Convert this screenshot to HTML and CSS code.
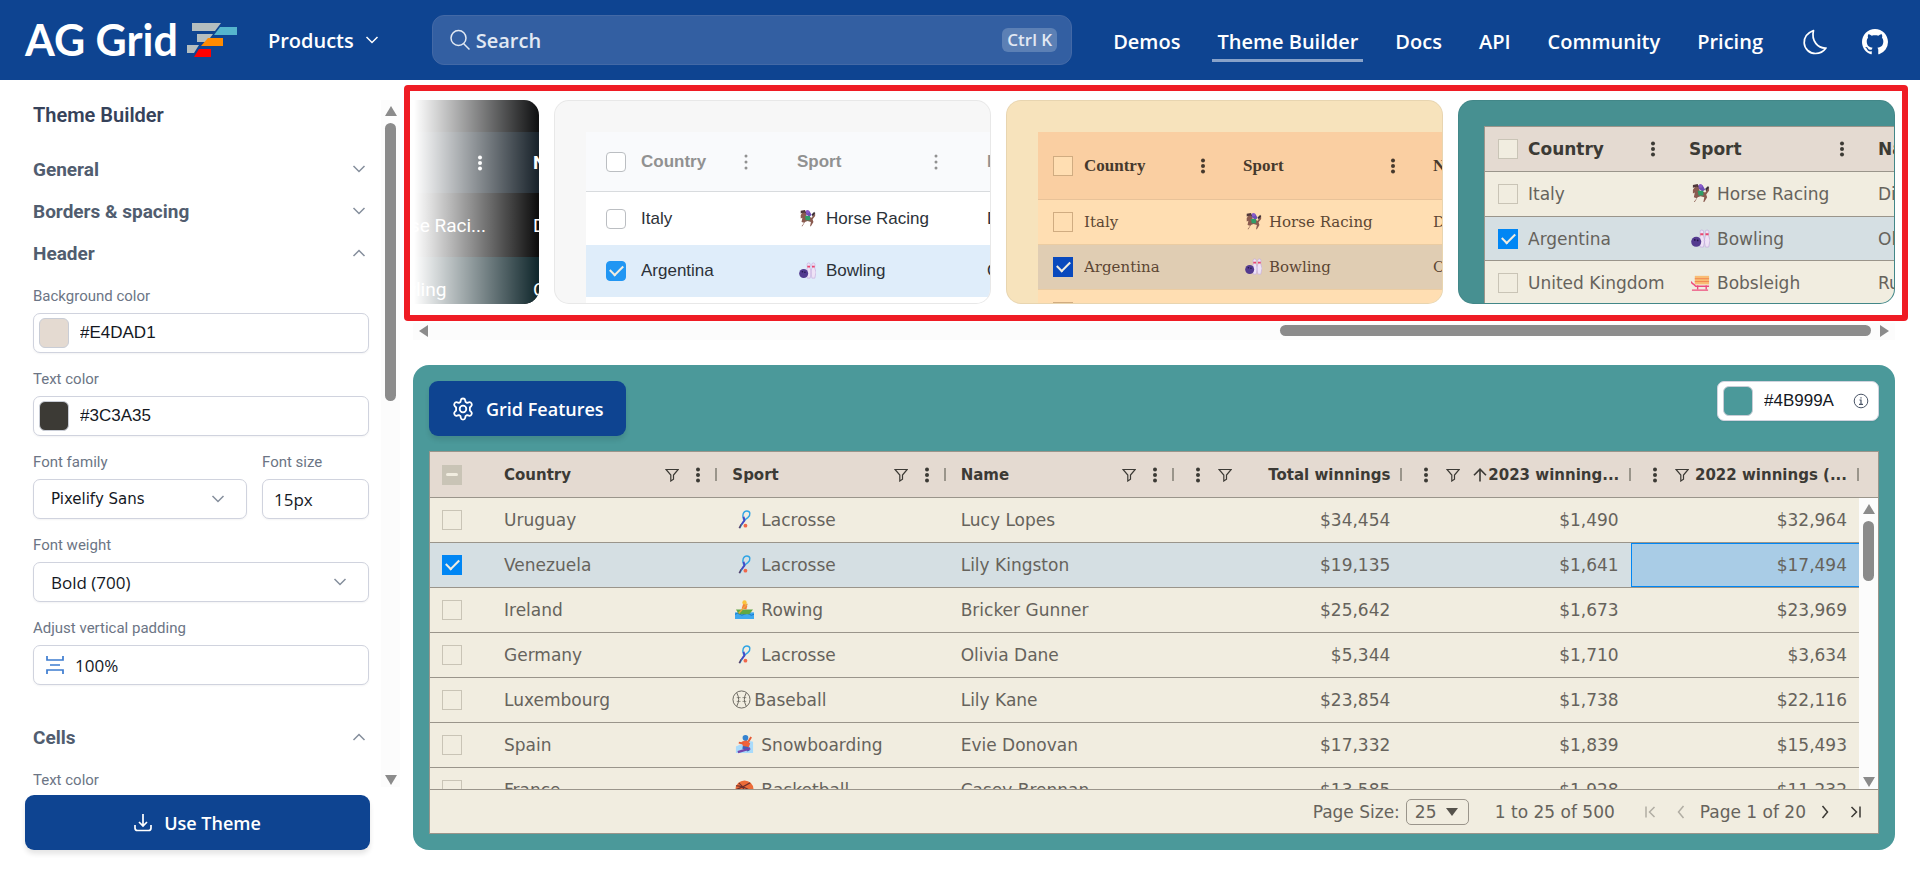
FILE: index.html
```html
<!DOCTYPE html>
<html lang="en">
<head>
<meta charset="utf-8">
<title>AG Grid Theme Builder</title>
<link rel="stylesheet" href="styles.css">
</head>
<body>
<svg class="sprite" aria-hidden="true">
  <symbol id="chev-down" viewBox="0 0 16 16"><path d="M2.500 5l5.500 5.500L13.500 5" fill="none" stroke="currentColor" stroke-width="1.500"/></symbol>
  <symbol id="chev-up" viewBox="0 0 16 16"><path d="M2.500 11L8 5.500l5.500 5.500" fill="none" stroke="currentColor" stroke-width="1.500"/></symbol>
  <symbol id="dots" viewBox="0 0 14 16"><circle cx="7" cy="2.500" r="2"/><circle cx="7" cy="8" r="2"/><circle cx="7" cy="13.500" r="2"/></symbol>
  <symbol id="dots-sm" viewBox="0 0 14 16"><circle cx="7" cy="2" r="1.500"/><circle cx="7" cy="8" r="1.500"/><circle cx="7" cy="14" r="1.500"/></symbol>
  <symbol id="filter" viewBox="0 0 14 14"><path d="M1 1.500h12.200L8.500 7v4.200L5.800 13V7z" fill="none" stroke="currentColor" stroke-width="1.200"/></symbol>
  <symbol id="arrow-up" viewBox="0 0 14 14"><path d="M7 13.500V1.500M1 7.200l6-6 6 6" fill="none" stroke="currentColor" stroke-width="1.600"/></symbol>
  <symbol id="horse" viewBox="0 0 20 20"><path d="M2 6l3-4 3 1 1 4 6 2 3-4 1-2v4l-3 4 1 3-3 5h-1l1-5-4-1-3 1-3 5H3l3-4-3-1 1-5-2 1z" fill="#8a5b50"/><path d="M2 1l5-1 2 4-3-1-4 1z" fill="#50373a"/><path d="M8 1h4l3 5-3 2-4-3z" fill="#6c4fb5"/><path d="M7 7h6v5H8z" fill="#2f9d68"/><path d="M15 5l3-3 1 2-3 4z" fill="#3b3036"/><circle cx="10" cy="2" r="2" fill="#8b5acb"/></symbol>
  <symbol id="bowling" viewBox="0 0 20 20"><path d="M9.500 3a1.900 1.900 0 0 1 3.800 0l-.4 3.500 1.600 5.500-1.400 7H9.700L8.300 12l1.600-5.500zM15 3a1.900 1.900 0 0 1 3.800 0l-.4 3.500L20 12l-1.400 7h-3.400L13.800 12l1.600-5.500z" fill="#eee2f6" stroke="#c3a9dc" stroke-width=".7"/><path d="M9.800 4.500h3.200v2H9.800zM15.300 4.500h3.200v2h-3.200z" fill="#ea4770"/><circle cx="5.500" cy="13.500" r="5.300" fill="#533a8f"/><circle cx="4" cy="11.500" r=".9" fill="#221547"/><circle cx="7" cy="12" r=".9" fill="#221547"/></symbol>
  <symbol id="sled" viewBox="0 0 20 20"><path d="M4 3h15v9H4z" fill="#f9bd74"/><path d="M4 6h15M4 9h15" stroke="#f08550" stroke-width="1"/><path d="M0 9q1 2 3 3l2 2h14M7 13v4M16 13v4M1 18h17" stroke="#ed4c7c" stroke-width="1.500" fill="none"/></symbol>
  <symbol id="lacrosse" viewBox="0 0 20 20"><path d="M9 10C7 5 9 1 12.500 1s4.500 4 1 7l-4 3L5 19" fill="none" stroke="#2fa4e4" stroke-width="1.500"/><path d="M9 7l1 4-3 4" fill="none" stroke="#4548c4" stroke-width="2"/><path d="M6.500 15L4.500 19" stroke="#55416b" stroke-width="1.600"/><circle cx="11" cy="16.500" r="2" fill="#f0674a"/></symbol>
  <symbol id="rowing" viewBox="0 0 20 20"><path d="M0 13h20v7H0z" fill="#3fa9ef"/><path d="M0 15q3-2 5 0t5 0 5 0 5 0" stroke="#1974ca" fill="none"/><path d="M1 10h18l-4 5H4z" fill="#60a844"/><path d="M7 9l2-6 4 3-1 4z" fill="#f77b3a"/><circle cx="10" cy="2.500" r="2.300" fill="#fbc33b"/><path d="M13 4L4 14" stroke="#e9a742" stroke-width="1.500"/></symbol>
  <symbol id="baseball" viewBox="0 0 20 20"><g fill="none" stroke="currentColor"><circle cx="10" cy="10" r="9"/><path d="M5 3q4 7 0 14M15 3q-4 7 0 14"/><path d="M5 8h4M5 12h4M11 8h4M11 12h4" stroke-width=".7"/></g></symbol>
  <symbol id="snow" viewBox="0 0 20 20"><path d="M1 12l13-6 5 1v12H1z" fill="#a9dbfb"/><path d="M7 7l5-2 4 4-2 5H9z" fill="#f1623c"/><circle cx="11" cy="3" r="3" fill="#3483d0"/><path d="M4 8l5 1M14 7l3-5" stroke="#e55b35" stroke-width="2"/><path d="M8 13l5 1 1 3" stroke="#3a65bd" stroke-width="3" fill="none"/><path d="M3 18L16 14" stroke="#7246ad" stroke-width="2.500"/></symbol>
  <symbol id="basket" viewBox="0 0 20 20"><circle cx="10" cy="10" r="9.500" fill="#ec6c38"/><path d="M4 3q8 6 5 16M16 3Q8 8 1 10M1 6q10 0 18 8" stroke="#6e2f2d" stroke-width="1.200" fill="none"/></symbol>
</svg>

<header class="topbar">
  <a class="logo" href="#"><span>AG Grid</span>
    <svg width="52" height="36" viewBox="0 0 52 36" aria-hidden="true"><path d="M6 1h29l-6 8H6z" fill="#b4bebf"/><path d="M34 5h17v8H28z" fill="#55b5cd"/><path d="M11 12h16l-6 8H11z" fill="#b4bebf"/><path d="M22 16h15v8H15z" fill="#ff8b00"/><path d="M1 23h12l-5 8H1z" fill="#b4bebf"/><path d="M13 27h12v8H8z" fill="#f00"/></svg>
  </a>
  <button class="products" type="button">Products <svg width="16" height="16"><use href="#chev-down"/></svg></button>
  <button class="search" type="button">
    <svg width="22" height="22" viewBox="0 0 22 22" fill="none" stroke="currentColor" stroke-width="1.500"><circle cx="9.500" cy="9" r="7.500"/><path d="M14.500 14.500l6 6"/></svg>
    <span class="search-label">Search</span><kbd>Ctrl K</kbd>
  </button>
  <nav class="nav">
    <a href="#">Demos</a><a href="#" class="active">Theme Builder</a><a href="#">Docs</a><a href="#">API</a><a href="#">Community</a><a href="#">Pricing</a>
  </nav>
  <button class="icon-btn moon" type="button" aria-label="Dark mode"><svg width="26" height="26" viewBox="0 0 26 26" fill="none" stroke="currentColor" stroke-width="1.700" stroke-linejoin="round"><path d="M11.500 1.500C5 4 2 9 2.200 14 2.500 20 7.500 24.500 13.500 24.500c4.500 0 8-2 10.500-5.500C16 19.500 9 12 11.500 1.500z"/></svg></button>
  <a class="icon-btn" href="#" aria-label="GitHub"><svg width="26" height="26" viewBox="0 0 16 16" fill="currentColor"><path d="M8 0C3.580 0 0 3.580 0 8c0 3.540 2.290 6.530 5.470 7.590.4.070.55-.17.550-.38 0-.19-.01-.82-.01-1.490-2.010.37-2.530-.49-2.690-.94-.09-.23-.48-.94-.82-1.130-.28-.15-.68-.52-.01-.53.630-.01 1.080.58 1.230.82.720 1.210 1.870.87 2.330.66.070-.52.280-.87.510-1.070-1.780-.2-3.640-.89-3.640-3.950 0-.87.310-1.590.82-2.150-.08-.2-.36-1.020.08-2.120 0 0 .67-.21 2.200.82.640-.18 1.320-.27 2-.27s1.360.09 2 .27c1.530-1.040 2.200-.82 2.200-.82.440 1.100.16 1.920.08 2.120.51.560.82 1.270.82 2.150 0 3.070-1.870 3.750-3.650 3.950.29.250.54.730.54 1.480 0 1.070-.01 1.930-.01 2.200 0 .21.150.46.550.38A8.010 8.010 0 0 0 16 8c0-4.420-3.580-8-8-8z"/></svg></a>
</header>

<main class="layout">
  <aside class="sidebar">
    <div class="side-scroll">
      <form class="editor">
        <h1>Theme Builder</h1>
        <button class="section" type="button">General <svg width="16" height="16"><use href="#chev-down"/></svg></button>
        <button class="section" type="button">Borders &amp; spacing <svg width="16" height="16"><use href="#chev-down"/></svg></button>
        <button class="section" type="button">Header <svg width="16" height="16"><use href="#chev-up"/></svg></button>
        <div class="field"><label for="bg">Background color</label>
          <div class="box"><span class="swatch sand"></span><input class="hex" id="bg" type="text" value="#E4DAD1"></div></div>
        <div class="field"><label for="fg">Text color</label>
          <div class="box"><span class="swatch ink"></span><input class="hex" id="fg" type="text" value="#3C3A35"></div></div>
        <div class="pair">
          <div class="field"><label for="ff">Font family</label>
            <div class="box pick"><select id="ff" class="pixel"><option>Pixelify Sans</option></select><svg width="16" height="16"><use href="#chev-down"/></svg></div></div>
          <div class="field"><label for="fs">Font size</label>
            <div class="box"><input id="fs" type="text" value="15px"></div></div>
        </div>
        <div class="field"><label for="fw">Font weight</label>
          <div class="box pick"><select id="fw"><option>Bold (700)</option></select><svg width="16" height="16"><use href="#chev-down"/></svg></div></div>
        <div class="field"><label for="vp">Adjust vertical padding</label>
          <div class="box"><svg class="pad-icon" width="18" height="18" viewBox="0 0 18 18" fill="none" stroke="#3d7cd0" stroke-width="1.700"><path d="M1 0v4h16V0M1 18v-4h16v4M4 9h10"/></svg><input id="vp" type="text" value="100%"></div></div>
        <button class="section cells" type="button">Cells <svg width="16" height="16"><use href="#chev-up"/></svg></button>
        <div class="field"><label for="ct">Text color</label><div class="box"><input id="ct" type="text" value=""></div></div>
      </form>
      <div class="vbar"><i class="up"></i><i class="thumb"></i><i class="down"></i></div>
    </div>
    <button class="primary use" type="button"><svg width="18" height="18" viewBox="0 0 18 18" fill="none" stroke="currentColor" stroke-width="1.700"><path d="M9 0v12M5 8l4 4 4-4M1 11v3q0 2.500 2.500 2.500h11Q17 16.500 17 14v-3"/></svg>Use Theme</button>
  </aside>

  <section class="content">
    <div class="gallery">
      <div class="strip">
        <div class="card dark"><table>
          <colgroup><col class="c1"><col class="c2"><col class="c3"><col class="c4"></colgroup>
          <tr><th></th><th></th><th><div class="hd">Sport<svg class="dots"><use href="#dots"/></svg></div></th><th>Name</th></tr>
          <tr><td></td><td></td><td><svg class="em"><use href="#horse"/></svg>Horse Raci...</td><td>Dimple</td></tr>
          <tr><td></td><td></td><td><svg class="em"><use href="#bowling"/></svg>Bowling</td><td>Olivia</td></tr>
        </table></div>
        <div class="card light"><table>
          <colgroup><col class="c1"><col class="c2"><col class="c3"><col class="c4"></colgroup>
          <tr><th><input type="checkbox" aria-label="Select all"></th><th><div class="hd">Country<svg class="dots"><use href="#dots-sm"/></svg></div></th><th><div class="hd">Sport<svg class="dots"><use href="#dots-sm"/></svg></div></th><th>Name</th></tr>
          <tr><td><input type="checkbox" aria-label="Italy"></td><td>Italy</td><td><svg class="em"><use href="#horse"/></svg>Horse Racing</td><td>Dimple</td></tr>
          <tr class="sel"><td><input type="checkbox" checked aria-label="Argentina"></td><td>Argentina</td><td><svg class="em"><use href="#bowling"/></svg>Bowling</td><td>Olivia</td></tr>
          <tr><td></td><td></td><td></td><td></td></tr>
        </table></div>
        <div class="card peach"><table>
          <colgroup><col class="c1"><col class="c2"><col class="c3"><col class="c4"></colgroup>
          <tr><th><input type="checkbox" aria-label="Select all"></th><th><div class="hd">Country<svg class="dots"><use href="#dots"/></svg></div></th><th><div class="hd">Sport<svg class="dots"><use href="#dots"/></svg></div></th><th>Name</th></tr>
          <tr><td><input type="checkbox" aria-label="Italy"></td><td>Italy</td><td><svg class="em"><use href="#horse"/></svg>Horse Racing</td><td>Dimple</td></tr>
          <tr class="sel"><td><input type="checkbox" checked aria-label="Argentina"></td><td>Argentina</td><td><svg class="em"><use href="#bowling"/></svg>Bowling</td><td>Olivia</td></tr>
          <tr><td><input type="checkbox" aria-label="United Kingdom"></td><td></td><td></td><td></td></tr>
        </table></div>
        <div class="card teal"><table>
          <colgroup><col class="c1"><col class="c2"><col class="c3"><col class="c4"></colgroup>
          <tr><th><input type="checkbox" aria-label="Select all"></th><th><div class="hd">Country<svg class="dots"><use href="#dots"/></svg></div></th><th><div class="hd">Sport<svg class="dots"><use href="#dots"/></svg></div></th><th>Name</th></tr>
          <tr><td><input type="checkbox" aria-label="Italy"></td><td>Italy</td><td><svg class="em"><use href="#horse"/></svg>Horse Racing</td><td>Dimple</td></tr>
          <tr class="sel"><td><input type="checkbox" checked aria-label="Argentina"></td><td>Argentina</td><td><svg class="em"><use href="#bowling"/></svg>Bowling</td><td>Olivia</td></tr>
          <tr><td><input type="checkbox" aria-label="United Kingdom"></td><td>United Kingdom</td><td><svg class="em"><use href="#sled"/></svg>Bobsleigh</td><td>Ruby</td></tr>
        </table></div>
      </div>
    </div>
    <div class="hbar"><i class="left"></i><i class="thumb"></i><i class="right"></i></div>

    <div class="panel">
      <div class="tools">
        <button class="primary features" type="button"><svg width="24" height="24" viewBox="0 0 24 24" fill="none" stroke="currentColor" stroke-width="1.800" stroke-linejoin="round"><circle cx="12" cy="12" r="3.300"/><path d="M9.800 3.200C10.200.9 13.800.9 14.200 3.200L14.600 5l1.500.9 1.800-.6c2.200-.7 3.900 2.300 2.300 3.900L18.900 10.500v3l1.300 1.300c1.600 1.600-.1 4.600-2.300 3.900l-1.800-.6-1.500.9-.4 1.800c-.4 2.300-4 2.300-4.400 0L9.400 19l-1.500-.9-1.800.6C3.900 19.400 2.200 16.400 3.800 14.800l1.300-1.300v-3L3.800 9.200C2.200 7.600 3.900 4.600 6.100 5.300l1.800.6L9.400 5z"/></svg>Grid Features</button>
        <div class="box backdrop"><span class="swatch sea"></span><input class="hex" type="text" value="#4B999A" aria-label="Backdrop color"><svg width="16" height="16" viewBox="0 0 16 16" fill="none" stroke="#4a5567"><circle cx="8" cy="8" r="6.800"/><path d="M6.500 7H8v4M6 11.300h4M8 4.200v1.400" stroke-width="1.200"/></svg></div>
      </div>
      <div class="grid">
        <div class="ghead"><table>
          <colgroup><col class="chk"><col><col><col><col><col><col></colgroup>
          <tr>
            <th><input type="checkbox" class="mixed" aria-label="Select all"></th>
            <th class="sep"><div class="hd"><span>Country</span><svg class="flt"><use href="#filter"/></svg><svg class="dots"><use href="#dots"/></svg></div></th>
            <th class="sep"><div class="hd"><span>Sport</span><svg class="flt"><use href="#filter"/></svg><svg class="dots"><use href="#dots"/></svg></div></th>
            <th class="sep"><div class="hd"><span>Name</span><svg class="flt"><use href="#filter"/></svg><svg class="dots"><use href="#dots"/></svg></div></th>
            <th class="sep num"><div class="hd"><svg class="dots"><use href="#dots"/></svg><svg class="flt"><use href="#filter"/></svg><span>Total winnings</span></div></th>
            <th class="sep num"><div class="hd"><svg class="dots"><use href="#dots"/></svg><svg class="flt"><use href="#filter"/></svg><svg class="arr"><use href="#arrow-up"/></svg><span>2023 winning...</span></div></th>
            <th class="sep num"><div class="hd"><svg class="dots"><use href="#dots"/></svg><svg class="flt"><use href="#filter"/></svg><span>2022 winnings (...</span></div></th>
          </tr></table></div>
        <div class="gbody">
          <div class="rows"><table>
          <colgroup><col class="chk"><col><col><col><col><col><col></colgroup>
          <tr><td><input type="checkbox" aria-label="Select row 1"></td><td>Uruguay</td><td><svg class="em"><use href="#lacrosse"/></svg>Lacrosse</td><td>Lucy Lopes</td><td class="num">$34,454</td><td class="num">$1,490</td><td class="num">$32,964</td></tr>
          <tr class="sel"><td><input type="checkbox" checked aria-label="Select row 2"></td><td>Venezuela</td><td><svg class="em"><use href="#lacrosse"/></svg>Lacrosse</td><td>Lily Kingston</td><td class="num">$19,135</td><td class="num">$1,641</td><td class="num focus">$17,494</td></tr>
          <tr><td><input type="checkbox" aria-label="Select row 3"></td><td>Ireland</td><td><svg class="em"><use href="#rowing"/></svg>Rowing</td><td>Bricker Gunner</td><td class="num">$25,642</td><td class="num">$1,673</td><td class="num">$23,969</td></tr>
          <tr><td><input type="checkbox" aria-label="Select row 4"></td><td>Germany</td><td><svg class="em"><use href="#lacrosse"/></svg>Lacrosse</td><td>Olivia Dane</td><td class="num">$5,344</td><td class="num">$1,710</td><td class="num">$3,634</td></tr>
          <tr><td><input type="checkbox" aria-label="Select row 5"></td><td>Luxembourg</td><td><svg class="em ball"><use href="#baseball"/></svg>Baseball</td><td>Lily Kane</td><td class="num">$23,854</td><td class="num">$1,738</td><td class="num">$22,116</td></tr>
          <tr><td><input type="checkbox" aria-label="Select row 6"></td><td>Spain</td><td><svg class="em"><use href="#snow"/></svg>Snowboarding</td><td>Evie Donovan</td><td class="num">$17,332</td><td class="num">$1,839</td><td class="num">$15,493</td></tr>
          <tr><td><input type="checkbox" aria-label="Select row 7"></td><td>France</td><td><svg class="em"><use href="#basket"/></svg>Basketball</td><td>Casey Brennan</td><td class="num">$13,585</td><td class="num">$1,928</td><td class="num">$11,232</td></tr>
          </table></div>
          <div class="vbar"><i class="up"></i><i class="thumb"></i><i class="down"></i></div>
        </div>
        <div class="gfoot">
          <label for="ps">Page Size:</label>
          <span class="psize"><select id="ps"><option>25</option></select><i></i></span>
          <span class="range">1 to 25 of 500</span>
          <button type="button" disabled aria-label="First page"><svg width="14" height="14" viewBox="0 0 14 14"><path d="M3 1.500v11M11.500 2L6.500 7l5 5"/></svg></button>
          <button type="button" disabled aria-label="Previous page"><svg width="14" height="14" viewBox="0 0 14 14"><path d="M9.500 1l-5 6 5 6"/></svg></button>
          <span class="page">Page 1 of 20</span>
          <button type="button" aria-label="Next page"><svg width="14" height="14" viewBox="0 0 14 14"><path d="M4.500 1l5 6-5 6"/></svg></button>
          <button type="button" aria-label="Last page"><svg width="14" height="14" viewBox="0 0 14 14"><path d="M11 1.500v11M2.500 2l5 5-5 5"/></svg></button>
        </div>
      </div>
    </div>
  </section>
</main>
</body>
</html>
```
FILE: styles.css
```css
* { box-sizing: border-box; }
body {
  margin: 0; height: 100vh; display: flex; flex-direction: column; overflow: hidden;
  background: #fff; color: #14181f; font-family: "Open Sans", sans-serif; font-size: 17px;
}
button, input, select { font: inherit; color: inherit; margin: 0; }
button { border: 0; background: none; padding: 0; }
a { color: inherit; text-decoration: none; }
svg { flex: none; }
.sprite { position: absolute; width: 0; height: 0; }

.topbar {
  height: 80px; flex: none; background: #0e4491; color: #fff; display: flex; align-items: center;
  padding: 0 32px 0 25px; font-size: 20px; font-weight: 600;
}
.logo { display: flex; align-items: center; gap: 8px; font: 700 43px/50px Lato, sans-serif; }
.products { display: flex; align-items: center; gap: 10px; margin-left: 30px; }
.search {
  flex: 1; min-width: 200px; height: 50px; margin: 0 36px 0 52px; padding: 0 14px 0 16px; display: flex; align-items: center; gap: 5px;
  border: 1px solid #4369a6; border-radius: 12px; background: #335fa2; color: #e2e9f3;
}
.search-label { flex: 1; text-align: left; }
.search kbd { font: 600 17px/24px "Open Sans", sans-serif; background: #5c80b5; border-radius: 6px; padding: 0 5px; }
.nav { display: flex; gap: 27px; padding-top: 4px; }
.nav a { padding: 5px 5px 4px; line-height: 27px; border-bottom: 3px solid transparent; }
.nav .active { border-color: #88a2c9; }
.icon-btn { display: flex; margin-left: 34px; padding-top: 4px; }

.layout { flex: 1; min-height: 0; display: flex; }
.sidebar { width: 400px; flex: none; display: flex; flex-direction: column; padding: 20px 0 19px; }
.side-scroll { flex: 1; min-height: 0; display: flex; overflow: hidden; }
.editor { flex: 1; padding: 0 12px 0 33px; overflow: hidden; font-family: Roboto, sans-serif; }
.editor h1 { margin: 0 0 18px; font: 600 20px/30px Roboto, sans-serif; color: #36425a; }
.section {
  display: flex; width: 100%; justify-content: space-between; align-items: center; height: 42px; padding-right: 2px;
  font-weight: 700; font-size: 19px; color: #515d6f;
}
.section svg, .pick svg { color: #858e9c; }
.field { margin-bottom: 16px; }
.field label { display: block; font-size: 15px; line-height: 20px; margin-bottom: 7px; color: #6c7585; }
.section + .field { margin-top: 12px; }
.box {
  height: 40px; display: flex; align-items: center; border: 1px solid #d0d3de; border-radius: 7px; background: #fff;
  box-shadow: 0 1px 2px #1018280d; padding: 0 5px;
}
.box input, .box select {
  flex: 1; min-width: 0; width: 100%; border: 0; background: none; outline: 0; padding: 0 6px; font-family: "Open Sans", sans-serif;
}
.box .hex { font-family: "Liberation Sans", sans-serif; padding: 0 11px; }
.swatch { width: 30px; height: 30px; flex: none; border: 1px solid #c9cdd6; border-radius: 6px; }
.sand { background: #e4dad1; }
.ink { background: #3c3a35; }
.sea { background: #4b999a; }
.pick { padding: 0 20px 0 11px; }
.box select { appearance: none; }
.box .pixel { font: 15px "DejaVu Sans", sans-serif; }
.pair { display: grid; grid-template-columns: 2fr 1fr; gap: 15px; }
.pad-icon { margin: 0 5px 0 7px; }
.cells { margin-top: 31px; }
.vbar { width: 19px; flex: none; background: #fcfcfc; display: flex; flex-direction: column; align-items: center; padding: 6px 0 2px; }
.vbar .up { border: 6px solid transparent; border-top: 0; border-bottom: 10px solid #8b8b8b; }
.vbar .down { border: 6px solid transparent; border-bottom: 0; border-top: 10px solid #8b8b8b; margin-top: auto; }
.vbar .thumb { width: 11px; height: 41%; border-radius: 6px; background: #8b8b8b; margin-top: 7px; }
.primary {
  height: 55px; border-radius: 9px; background: #0e4491; color: #fff; font-weight: 600; font-size: 18px;
  display: flex; align-items: center; justify-content: center; gap: 12px; box-shadow: 0 4px 5px #0000001a;
}
.use { margin: 8px 30px 0 25px; }

.content { flex: 1; min-width: 0; display: flex; flex-direction: column; padding: 5px 25px 19px 13px; }
.gallery { margin: 0 -13px 0 -9px; border: 6px solid #ef1c24; border-radius: 4px; padding: 9px 7px 11px 3px; }
.strip { display: flex; justify-content: flex-end; gap: 15px; overflow: hidden; height: 204px; }
.card { width: 437px; flex: none; border: 1px solid #0000000f; border-radius: 15px; overflow: hidden; position: relative; }
table { border-collapse: separate; border-spacing: 0; table-layout: fixed; }
th, td { padding: 0; text-align: left; white-space: nowrap; overflow: hidden; }
.hd { display: flex; align-items: center; justify-content: space-between; }
.dots { width: 14px; height: 16px; fill: currentColor; }
.em { width: 17px; height: 17px; margin: 0 10px 0 2px; vertical-align: -3px; }
.card table { width: 580px; }
input[type=checkbox] {
  appearance: none; display: grid; place-items: center; width: 20px; height: 20px; border: 1px solid #c9c4b6; background: transparent;
}
input[type=checkbox]:checked { background: #0086f4; border-color: #0086f4; }
input[type=checkbox]:checked::after { content: ""; width: 11px; height: 6px; border: solid #f1ede0; border-width: 0 0 2px 2px; transform: translateY(-2px) rotate(-45deg); }

.dark { border: 0; padding: 32px 0 0 30px; background: #101112; color: #fff; font: 19px Roboto, sans-serif; }
.dark::after { content: ""; position: absolute; inset: 0; background: linear-gradient(90deg, #fff 312px, #fff0 436px); }
.dark .c1 { width: 55px; } .dark .c2 { width: 163px; } .dark .c3 { width: 183px; }
.dark th { height: 61px; background: #19232b; }
.dark td { height: 64px; background: #0d0d0d; }
.dark tr:last-child td { background: #10272c; }
.dark .hd { padding-right: 46px; }

.light { padding: 31px 0 0 31px; background: #f7f7f7; font: 17px "Liberation Sans", sans-serif; color: #2b3138; }
.light .c1 { width: 55px; } .light .c2 { width: 156px; } .light .c3 { width: 190px; }
.light th { height: 60px; background: #f9fafc; border-bottom: 1px solid #d8dbde; color: #919191; }
.light td { height: 53px; background: #fff; }
.light .sel td { height: 52px; background: #dfedfa; }
.light input { margin-left: 20px; border-color: #bbbec2; border-radius: 4px; background: #fff; }
.light input:checked { background: #2196f3; border-color: #2196f3; }
.light .hd { padding-right: 44px; }

.peach { padding: 31px 0 0 31px; background: #f7e3bc; font: 15px "DejaVu Serif", serif; color: #5c4633; }
.peach .c1 { width: 46px; } .peach .c2 { width: 159px; } .peach .c3 { width: 190px; }
.peach th { height: 68px; background: #facfa2; border-bottom: 1px solid #e8c298; font: 700 17px "Liberation Serif", serif; color: #46392d; }
.peach td { height: 45px; background: #ffdeb2; border-bottom: 1px solid #ebcca2; }
.peach .sel td { background: #e0cdb3; }
.peach input { margin-left: 15px; border-color: #d0ac81; background: #ffdeb2; }
.peach td input { background: none; }
.peach input:checked { background: #0949bd; border-color: #0949bd; }
.peach .hd { padding-right: 33px; }
.peach .em { margin-right: 7px; }

.teal { padding: 25px 0 0 25px; background: #479091; font: 17px "DejaVu Sans", sans-serif; color: #66635c; }
.teal table { border: 1px solid #9a958b; }
.teal .c1 { width: 43px; } .teal .c2 { width: 161px; } .teal .c3 { width: 189px; }
.teal th { height: 45px; background: #e4dad1; border-bottom: 1px solid #9a958b; color: #3c3a35; }
.teal td { height: 45px; background: #f1ede0; border-bottom: 1px solid #9a958b; }
.teal tr:nth-child(n+3) td { height: 44px; }
.teal .sel td { background: #d5dfe3; }
.teal input { margin-left: 13px; }
.teal th input { background: #f1ede0; }
.teal .hd { padding-right: 29px; }
.teal .em { width: 19px; height: 19px; margin-right: 7px; }

.hbar { height: 17px; margin: 2px 0 25px; background: #fcfcfc; display: flex; align-items: center; padding: 0 6px 2px; flex: none; }
.hbar .left { border: 6px solid transparent; border-left: 0; border-right: 9px solid #8b8b8b; }
.hbar .right { border: 6px solid transparent; border-right: 0; border-left: 9px solid #8b8b8b; }
.hbar .thumb { width: 591px; height: 11px; border-radius: 6px; background: #8b8b8b; margin: 0 9px 0 auto; }

.panel { flex: 1; min-height: 0; display: flex; flex-direction: column; gap: 15px; padding: 16px; border-radius: 16px; background: #4b999a; }
.tools { display: flex; justify-content: space-between; align-items: flex-start; }
.features { padding: 0 22px; gap: 11px; }
.backdrop { width: 162px; padding-right: 9px; }
.grid {
  flex: 1; min-height: 0; display: flex; flex-direction: column; border: 1px solid #9a958b; background: #f1ede0;
  font: 17px "DejaVu Sans", sans-serif; color: #66635c;
}
.grid table { width: 100%; }
.chk { width: 59px; }
.ghead { padding-right: 19px; background: #e4dad1; border-bottom: 1px solid #9a958b; }
.ghead th { height: 45px; font-size: 15px; color: #3c3a35; }
.grid th, .grid td { padding: 0 12px 0 15px; }
.grid input { margin-left: -3px; }
.grid .mixed { background: #c9c4b6; }
.mixed::after { content: ""; width: 12px; height: 3px; border-radius: 2px; background: #f1ede0; }
.sep { position: relative; }
.sep::after { content: ""; position: absolute; right: 0; top: 16px; width: 2px; height: 13px; background: #9a958b; }
.ghead .hd { gap: 12px; }
.ghead .hd span { flex: 1; min-width: 0; }
.ghead .num { padding-left: 17px; }
.ghead .num span { text-align: right; }
.ghead .num .hd { gap: 13px; }
.flt { width: 14px; height: 14px; }
.arr { width: 14px; height: 14px; margin-right: -12px; }
.ghead .num:last-child .hd span { margin-left: -12px; }
.gbody { flex: 1; min-height: 0; display: flex; overflow: hidden; }
.rows { flex: 1; overflow: hidden; }
.gbody td { height: 45px; border-bottom: 1px solid #9a958b; }
.grid .num { text-align: right; }
.gbody .sel td { background: #d5dfe3; }
.gbody .sel .focus { background: #a9cce6; box-shadow: inset 1px 1px #0086f4, inset 0 -1px #0086f4; }
.gbody .em { width: 19px; height: 19px; margin: 0 7px 0 3px; }
.gbody .ball { margin: 0 3px 0 0; }
.gbody .vbar .thumb { height: 60px; }
.gfoot { height: 44px; flex: none; border-top: 1px solid #9a958b; display: flex; align-items: center; justify-content: flex-end; padding-right: 15px; }
.psize { position: relative; display: flex; align-items: center; margin: 0 26px 0 6px; }
.psize select { appearance: none; width: 63px; height: 26px; border: 1px solid #9a958b; border-radius: 5px; background: none; padding: 0 8px; }
.psize i { position: absolute; right: 11px; border: 6px solid transparent; border-bottom: 0; border-top: 8px solid #55524b; pointer-events: none; }
.range { margin-right: 28px; }
.gfoot button { display: flex; fill: none; stroke: #3c3a35; stroke-width: 1.5; }
.gfoot button svg { fill: none; }
.gfoot button:disabled { opacity: .35; }
.gfoot button + button { margin-left: 17px; }
.page { margin: 0 12px; }
```
